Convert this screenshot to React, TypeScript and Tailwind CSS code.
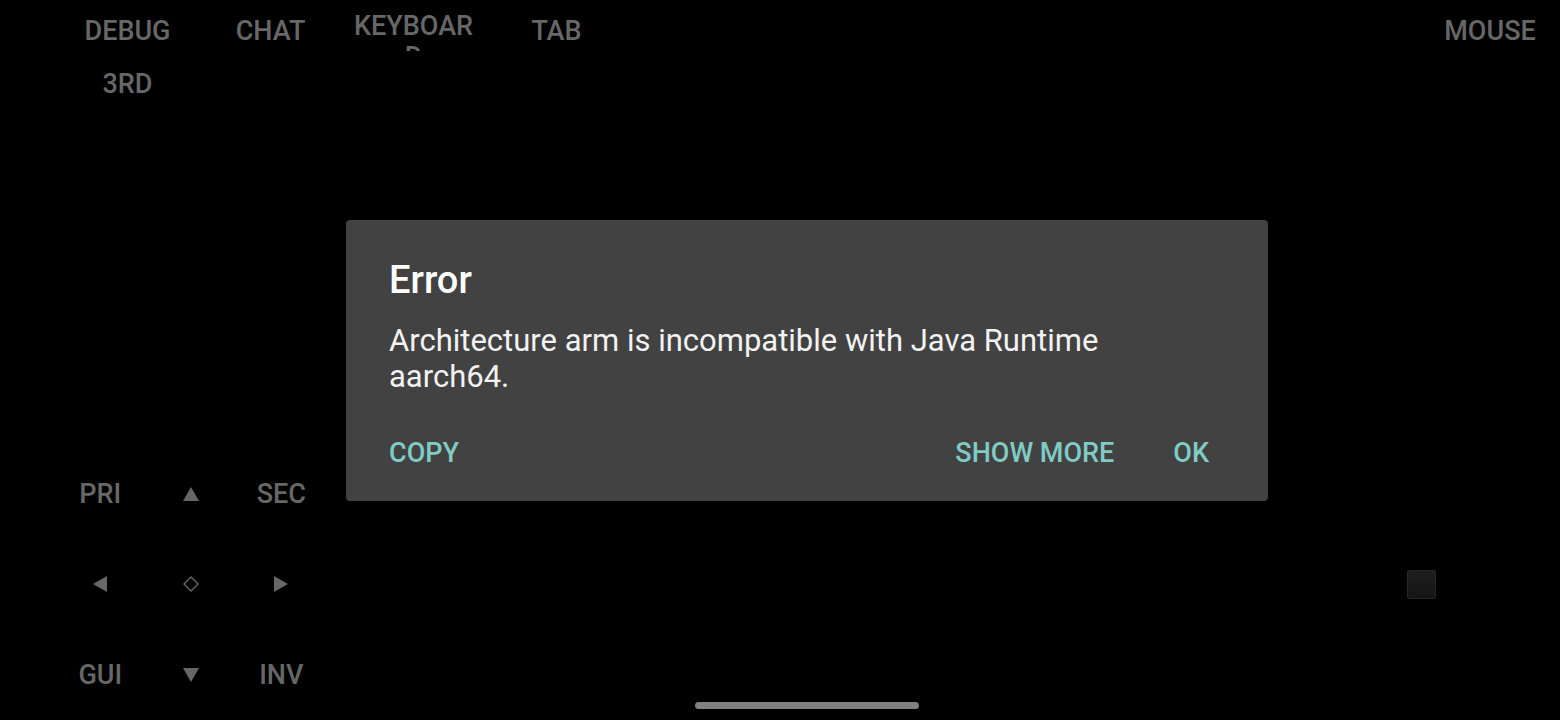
import React from "react";

const font = { fontFamily: "Roboto, 'Liberation Sans', sans-serif" };

function TopKey({ label }: { label: string }) {
  return (
    <div className="flex h-[53px] w-[143px] items-center justify-center text-[27px] font-medium leading-[30px] text-[#676767]">
      {label}
    </div>
  );
}

function Tri({ dir }: { dir: "up" | "down" | "left" | "right" }) {
  const pts = {
    up: "8,0 16,14 0,14",
    down: "0,0 16,0 8,14",
    left: "0,8 14,0 14,16",
    right: "0,0 14,8 0,16",
  }[dir];
  const vert = dir === "up" || dir === "down";
  return (
    <svg width={vert ? 16 : 14} height={vert ? 14 : 16} viewBox={vert ? "0 0 16 14" : "0 0 14 16"}>
      <polygon points={pts} fill="#676767" />
    </svg>
  );
}

function PadCell({ children }: { children: React.ReactNode }) {
  return (
    <div className="flex h-[90.5px] w-[90.5px] items-center justify-center text-[27px] font-medium leading-[30px] text-[#676767]">
      {children}
    </div>
  );
}

export default function App() {
  return (
    <div className="relative h-[720px] w-[1560px] overflow-hidden bg-black" style={font}>
      {/* top controls */}
      <div className="absolute left-[56px] top-[4px] flex flex-col">
        <div className="flex">
          <TopKey label="DEBUG" />
          <TopKey label="CHAT" />
          <div className="flex h-[47px] w-[143px] justify-center overflow-hidden">
            <div className="w-[128px] break-all pt-[7px] text-center text-[27px] font-medium leading-[31px] text-[#676767]">
              KEYBOARD
            </div>
          </div>
          <TopKey label="TAB" />
        </div>
        <TopKey label="3RD" />
      </div>
      <div className="absolute right-0 top-[4px]">
        <div className="flex h-[53px] w-[140px] items-center justify-center text-[27px] font-medium leading-[30px] text-[#676767]">
          MOUSE
        </div>
      </div>

      {/* d-pad */}
      <div className="absolute left-[55px] top-[448.5px] grid grid-cols-3">
        <PadCell>PRI</PadCell>
        <PadCell>
          <Tri dir="up" />
        </PadCell>
        <PadCell>SEC</PadCell>
        <PadCell>
          <Tri dir="left" />
        </PadCell>
        <PadCell>
          <svg width="16" height="16" viewBox="0 0 16 16">
            <polygon points="8,1 15,8 8,15 1,8" fill="none" stroke="#676767" strokeWidth="1.4" />
          </svg>
        </PadCell>
        <PadCell>
          <Tri dir="right" />
        </PadCell>
        <PadCell>GUI</PadCell>
        <PadCell>
          <Tri dir="down" />
        </PadCell>
        <PadCell>INV</PadCell>
      </div>

      {/* small square button */}
      <div className="absolute left-[1407px] top-[570px] h-[29px] w-[29px] rounded-[2px] border border-[#262626] bg-gradient-to-b from-[#1e1e1e] to-[#151515]" />

      {/* dialog */}
      <div className="absolute inset-0 flex items-center justify-center pl-[54px]">
        <div className="flex h-[281px] w-[922px] flex-col rounded-[4px] bg-[#424242] px-[43px] pt-[38px] shadow-lg">
          <div className="text-[38px] font-medium leading-[44px] text-white">Error</div>
          <div className="mt-[21px] text-[31px] leading-[36px] text-[#f2f2f2]">
            Architecture arm is incompatible with Java Runtime
            <br />
            aarch64.
          </div>
          <div className="mt-[43px] flex pr-[16px] text-[27px] font-medium leading-[30px] text-[#80cbc4]">
            <span>COPY</span>
            <span className="ml-auto">SHOW MORE</span>
            <span className="ml-[59px]">OK</span>
          </div>
        </div>
      </div>

      {/* home indicator */}
      <div className="absolute bottom-[11px] left-[695px] h-[7px] w-[224px] rounded-full bg-[#808080]" />
    </div>
  );
}
